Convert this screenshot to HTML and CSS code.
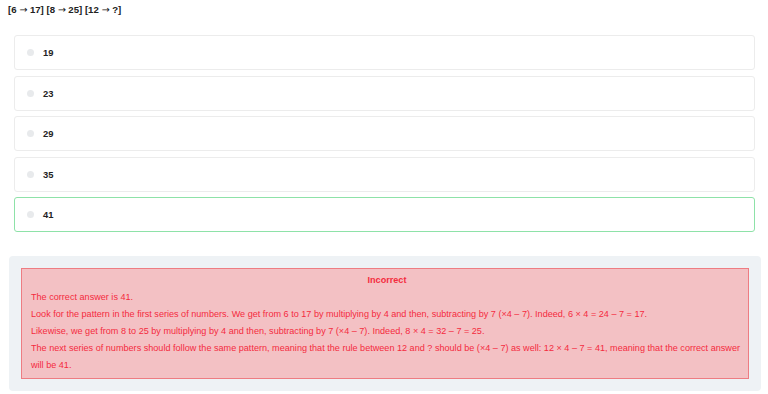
FILE: index.html
```html
<!DOCTYPE html>
<html>
<head>
<meta charset="utf-8">
<link rel="stylesheet" href="styles.css">
</head>
<body>
<div class="question">[6 <span class="arrow">→</span> 17] [8 <span class="arrow">→</span> 25] [12 <span class="arrow">→</span> ?]</div>
<div class="options">
  <div class="option"><span class="radio"></span><span class="label">19</span></div>
  <div class="option"><span class="radio"></span><span class="label">23</span></div>
  <div class="option"><span class="radio"></span><span class="label">29</span></div>
  <div class="option"><span class="radio"></span><span class="label">35</span></div>
  <div class="option correct"><span class="radio"></span><span class="label">41</span></div>
</div>
<div class="feedback">
  <div class="alert">
    <div class="alert-title">Incorrect</div>
    <p>The correct answer is 41.</p>
    <p>Look for the pattern in the first series of numbers. We get from 6 to 17 by multiplying by 4 and then, subtracting by 7 (×4 – 7). Indeed, 6 × 4 = 24 – 7 = 17.</p>
    <p>Likewise, we get from 8 to 25 by multiplying by 4 and then, subtracting by 7 (×4 – 7). Indeed, 8 × 4 = 32 – 7 = 25.</p>
    <p>The next series of numbers should follow the same pattern, meaning that the rule between 12 and ? should be (×4 – 7) as well: 12 × 4 – 7 = 41, meaning that the correct answer will be 41.</p>
  </div>
</div>
</body>
</html>
```
FILE: styles.css
```css
html, body {
  margin: 0;
  padding: 0;
  background: #ffffff;
}
body {
  font-family: "Liberation Sans", Arial, sans-serif;
  font-size: 9.1px;
  color: #222;
  padding: 4px 7px 0 8px;
}
.question {
  font-weight: bold;
  font-size: 9.6px;
  line-height: 12px;
  color: #222;
}
.arrow {
  font-family: "DejaVu Sans", sans-serif;
  font-weight: normal;
  font-size: 9.6px;
}
.options {
  margin: 19px 6px 0 6px;
  display: flex;
  flex-direction: column;
  gap: 5.5px;
}
.option {
  height: 33px;
  border: 1px solid #ececec;
  border-radius: 3px;
  display: flex;
  align-items: center;
  padding-left: 12px;
  background: #fff;
}
.option.correct {
  border: 1px solid #8ee2a8;
}
.radio {
  width: 7px;
  height: 7px;
  border-radius: 50%;
  background: #e8eaec;
  display: inline-block;
}
.label {
  margin-left: 9px;
  font-weight: bold;
  font-size: 9.4px;
  color: #222;
}
.feedback {
  margin: 24px 0 0 1px;
  background: #eef2f5;
  border-radius: 4px;
  padding: 12px 12px 12px 12px;
}
.alert {
  background: #f3c1c4;
  border: 1px solid #ee7c82;
  color: #f32b3e;
  padding: 3px 5px 4px 9px;
  line-height: 17px;
}
.alert-title {
  text-align: center;
  font-weight: bold;
}
.alert p {
  margin: 0;
}
```
